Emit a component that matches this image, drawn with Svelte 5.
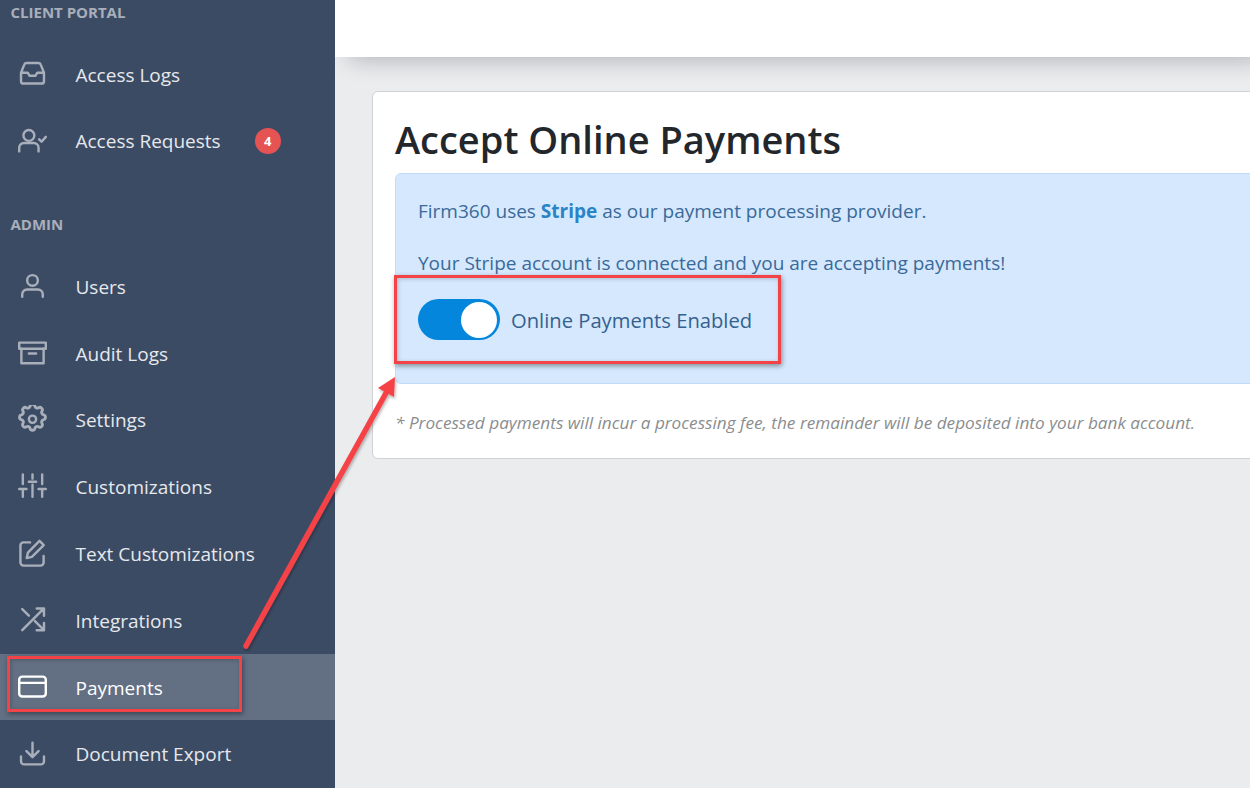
<script>
  const clientItems = [
    { label: 'Access Logs', icon: 'inbox' },
    { label: 'Access Requests', icon: 'usercheck', badge: 4 }
  ];
  const adminItems = [
    { label: 'Users', icon: 'user' },
    { label: 'Audit Logs', icon: 'archive' },
    { label: 'Settings', icon: 'gear' },
    { label: 'Customizations', icon: 'sliders' },
    { label: 'Text Customizations', icon: 'edit' },
    { label: 'Integrations', icon: 'shuffle' },
    { label: 'Payments', icon: 'card', active: true },
    { label: 'Document Export', icon: 'download' }
  ];
</script>

{#snippet icon(name)}
  <svg class="icon" viewBox="0 0 24 24" fill="none" stroke="currentColor" stroke-linecap="round" stroke-linejoin="round">
    {#if name === 'inbox'}
      <path d="M2.500 10.500v7a2 2 0 0 0 2 2h15a2 2 0 0 0 2-2v-7l-2.600-6.500a2 2 0 0 0-1.900-1.500H7a2 2 0 0 0-1.900 1.500zM2.500 10.500H8l1.500 2.500h5l1.500-2.500h5.500" />
    {:else if name === 'usercheck'}
      <circle cx="9" cy="7.800" r="4.500" />
      <path d="M1 21v-3a4 4 0 0 1 4-4h8a4 4 0 0 1 4 4v3" />
      <path d="M17.500 11l2 2 3.500-4" />
    {:else if name === 'user'}
      <circle cx="12" cy="7" r="4.400" />
      <path d="M3.500 20.500v-2a4 4 0 0 1 4-4h9a4 4 0 0 1 4 4v2" />
    {:else if name === 'archive'}
      <path d="M1 3h22v5H1z" />
      <path d="M2.800 8v12h18.400V8" />
      <path d="M9 12h6" />
    {:else if name === 'gear'}
      <circle cx="12" cy="11.800" r="3" />
      <path transform="translate(12 11.800) scale(1.180) translate(-12 -12)" d="M10.300 2.800c.4-1.700 3-1.700 3.400 0a1.700 1.700 0 0 0 2.600 1.100c1.500-.9 3.300.9 2.400 2.400a1.700 1.700 0 0 0 1.100 2.600c1.700.4 1.700 3 0 3.400a1.700 1.700 0 0 0-1.100 2.600c.9 1.500-.9 3.300-2.400 2.400a1.700 1.700 0 0 0-2.600 1.100c-.4 1.700-3 1.700-3.400 0a1.700 1.700 0 0 0-2.600-1.100c-1.500.9-3.300-.9-2.400-2.400a1.700 1.700 0 0 0-1.100-2.600c-1.700-.4-1.700-3 0-3.400a1.700 1.700 0 0 0 1.100-2.600c-.9-1.500.9-3.300 2.400-2.400a1.700 1.700 0 0 0 2.600-1.100z" />
    {:else if name === 'sliders'}
      <path d="M4 20.500v-5M4 10V2M12 20.500V10.500M12 5.500V2M20 20.500v-5M20 10V2M1 14h6M9 8h6M17 14h6" />
    {:else if name === 'edit'}
      <path d="M10 2.800H4.500a2.500 2.500 0 0 0-2.500 2.500v14.200a2.500 2.500 0 0 0 2.500 2.500h14.200a2.500 2.500 0 0 0 2.500-2.500V14" />
      <path d="M17.800 1.500l3.500 3.500-9.800 9.800-4.300 1 1-4.500z" />
    {:else if name === 'shuffle'}
      <path d="M15.500 2h6v6M3.500 20L21.500 2M21.500 14v6h-6M14 12.500L21.500 20M3.500 2.500L9 8" />
    {:else if name === 'card'}
      <rect x="1" y="3" width="22" height="16.500" rx="2.500" />
      <path d="M1 8.200h22" />
    {:else if name === 'download'}
      <path d="M2.500 14.500v4a2.500 2.500 0 0 0 2.500 2.500h14a2.500 2.500 0 0 0 2.500-2.500v-4M7 10l5 5 5-5M12 15V3" />
    {/if}
  </svg>
{/snippet}

{#snippet navItem(item)}
  <a class="item" class:active={item.active} href="#top">
    <span class="ico">{@render icon(item.icon)}</span>
    <span class="label">{item.label}</span>
    {#if item.badge}<span class="badge">{item.badge}</span>{/if}
  </a>
{/snippet}

<div class="page">
  <aside class="sidebar">
    <div class="heading first">CLIENT PORTAL</div>
    {#each clientItems as item}{@render navItem(item)}{/each}
    <div class="heading second">ADMIN</div>
    {#each adminItems as item}{@render navItem(item)}{/each}
  </aside>

  <div class="main">
    <header class="topbar"></header>
    <div class="content">
      <section class="card">
        <h1>Accept Online Payments</h1>
        <div class="alert">
          <p class="line1">Firm360 uses <strong>Stripe</strong> as our payment processing provider.</p>
          <p class="line2">Your Stripe account is connected and you are accepting payments!</p>
          <div class="toggle-row">
            <span class="toggle"><span class="knob"></span></span>
            <span class="toggle-label">Online Payments Enabled</span>
          </div>
        </div>
        <p class="note">* Processed payments will incur a processing fee, the remainder will be deposited into your bank account.</p>
      </section>
    </div>
  </div>

  <div class="mark mark-toggle"></div>
  <div class="mark mark-payments"></div>
  <svg class="arrow" width="1250" height="788" viewBox="0 0 1250 788">
    <defs>
      <filter id="sh" x="-20%" y="-20%" width="140%" height="140%">
        <feDropShadow dx="1" dy="2" stdDeviation="1.500" flood-color="#000" flood-opacity="0.3" />
      </filter>
    </defs>
    <g filter="url(#sh)">
      <path d="M246 646 L386 393" stroke="#f44347" stroke-width="5.500" stroke-linecap="round" fill="none" />
      <path d="M395 377 L378 388 L394 397 Z" fill="#f44347" />
    </g>
  </svg>
</div>

<style>
  :global(body) {
    margin: 0;
    font-family: "Open Sans", "Noto Sans", sans-serif;
    background: #ebecee;
  }
  .page {
    position: relative;
    display: flex;
    width: 1250px;
    height: 788px;
    overflow: hidden;
  }
  .sidebar {
    width: 335px;
    flex: none;
    background: #3c4b64;
    display: flex;
    flex-direction: column;
  }
  .heading {
    color: #a9afba;
    font-size: 15px;
    font-weight: 700;
    line-height: 18px;
    padding-left: 10.500px;
  }
  .first { margin-top: 3px; margin-bottom: 19.700px; }
  .second { margin-top: 40.300px; margin-bottom: 20.300px; }
  .item {
    height: 66.800px;
    flex: none;
    display: flex;
    align-items: center;
    color: #e6e8ec;
    text-decoration: none;
    font-size: 19px;
  }
  .item.active {
    background: #636f83;
    color: #fff;
  }
  .ico {
    width: 75.500px;
    flex: none;
    display: flex;
    padding-left: 18px;
    box-sizing: border-box;
    color: #a9afba;
  }
  .active .ico { color: #fff; }
  .icon { width: 29px; height: 29px; stroke-width: 2; }
  .label { padding-top: 1px; }
  .badge {
    margin-left: 35px;
    width: 26px;
    height: 26px;
    border-radius: 50%;
    background: #e55353;
    color: #fff;
    font-size: 13px;
    font-weight: 700;
    display: flex;
    align-items: center;
    justify-content: center;
    transform: translateX(-1px);
  }
  .main {
    flex: 1;
    min-width: 0;
    display: flex;
    flex-direction: column;
    overflow: hidden;
  }
  .topbar {
    height: 57px;
    flex: none;
    background: #fff;
    box-shadow: 14px 4px 22px rgba(0, 0, 21, 0.22);
    position: relative;
  }
  .content {
    flex: 1;
    padding: 34px 0 0 37px;
    background: #ebecee;
  }
  .card {
    box-sizing: border-box;
    width: 1000px;
    height: 368px;
    background: #fff;
    border: 1px solid #d0d2d6;
    border-radius: 6px;
    padding: 22px 22px 0;
  }
  h1 {
    margin: 0;
    color: #23272c;
    font-size: 38px;
    font-weight: 600;
    line-height: 51px;
  }
  .alert {
    box-sizing: border-box;
    margin-top: 8px;
    height: 211px;
    background: #d5e8fd;
    border: 1px solid #c2dcf8;
    border-radius: 6px;
    padding: 24px 22px 0;
    color: #3a6a99;
    font-size: 19px;
    line-height: 27px;
  }
  p { margin: 0; }
  .line2 { margin-top: 25px; }
  .alert strong { color: #2b83c7; font-weight: 700; }
  .toggle-row {
    display: flex;
    align-items: center;
    margin-top: 22px;
    gap: 11px;
  }
  .toggle {
    box-sizing: border-box;
    width: 82px;
    height: 41px;
    border-radius: 21px;
    background: #0386dc;
    position: relative;
    flex: none;
  }
  .knob {
    position: absolute;
    right: 3px;
    top: 3px;
    width: 36px;
    height: 36px;
    border-radius: 50%;
    background: #fff;
  }
  .toggle-label { color: #35618f; font-size: 20.200px; padding-top: 1px; }
  .note {
    margin-top: 27px;
    color: #8a8d8f;
    font-size: 17.200px;
    font-style: italic;
    line-height: 24px;
  }
  .mark {
    position: absolute;
    box-sizing: border-box;
    border: 3px solid #f44347;
    box-shadow: 1px 2px 5px rgba(0, 0, 0, 0.4), inset 1px 1px 4px rgba(0, 0, 0, 0.2);
  }
  .mark-toggle { left: 394px; top: 275px; width: 387px; height: 89px; }
  .mark-payments { left: 7px; top: 656px; width: 235px; height: 56px; }
  .arrow { position: absolute; left: 0; top: 0; pointer-events: none; }
</style>
